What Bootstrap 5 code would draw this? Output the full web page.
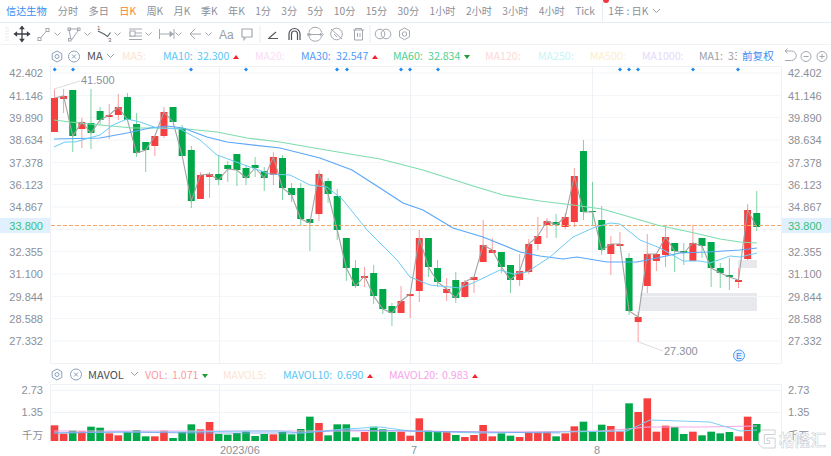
<!DOCTYPE html>
<html lang="zh-CN">
<head>
<meta charset="utf-8">
<title>信达生物 K线</title>
<link href="https://cdn.jsdelivr.net/npm/bootstrap@5.3.0/dist/css/bootstrap.min.css" rel="stylesheet">
<style>
html,body{margin:0;background:#fff;overflow:hidden}
body{width:831px;height:456px;position:relative;font-family:"Noto Sans CJK SC","Liberation Sans",sans-serif;color:#8b9099}
.tabbar{height:23px;padding:0 0 0 6px;font-size:10.2px;line-height:22px;border-bottom:1.5px solid #e6ecf3;gap:10.4px;white-space:nowrap;position:relative}
.tabbar .tb{color:#8b9099}
.tabbar .tb-name{color:#3b8df0;margin-right:.6px}
.tabbar .tb-on{color:#f9812a}
.tabbar .tb-range{border-left:1px solid #e6ecf3;padding-left:5px;margin-left:-3px;height:20px;line-height:20px;display:flex;align-items:center;gap:4px}
.dot-new{position:absolute;left:603px;top:-3px;width:6px;height:6px;border-radius:50%;background:#f5333f}
.toolrow{height:22px;border-bottom:1.5px solid #f0f2f5;position:relative}
.toolrow svg{display:block}
.legendrow{font-size:10.6px;white-space:nowrap;height:21px;line-height:21px;position:relative;overflow:hidden}
.legendrow .lg{position:absolute;top:0}
.plot{display:block}
.plot text{font-family:"Liberation Sans","Noto Sans CJK SC",sans-serif;font-size:11px;fill:#8b9099}
.plot text.cjk{font-family:"Noto Sans CJK SC",sans-serif;font-size:10.5px}
.tri-up,.tri-dn{display:inline-block;width:0;height:0;border-left:3px solid transparent;border-right:3px solid transparent;vertical-align:1px;margin-left:4px}
.tri-up{border-bottom:4px solid #f5222d}
.tri-dn{border-top:4px solid #1f9d35}
.lc-ma{color:#4a4f57;font-size:11px}
.c5{color:#fde3d3}.c10{color:#5cc5f5}.c20{color:#fbdcf5}.c30{color:#4f9bfa}.c60{color:#4fd08f}
.c120{color:#fcd8d8}.c250{color:#c6f5f8}.c500{color:#fdeccb}.c1000{color:#e5d9fb}.c1{color:#9a9ea6}
.cvol{color:#fb9a9e}.cm20{color:#f5a3ea}
.fq{color:#3b8df0;font-size:10.6px;background:#fff;padding-left:5px}
.brand{position:absolute;left:758px;top:428px;width:72px;height:22px;display:flex;align-items:center;gap:3px;white-space:nowrap;pointer-events:none}
.brand-t{font-family:"Noto Sans CJK SC",sans-serif;font-weight:700;font-size:15.5px;line-height:22px;letter-spacing:.3px;color:#fff;-webkit-text-stroke:.5px #c9ccd1;flex:none}
.brand svg{flex:none}
</style>
</head>
<body>
<nav class="tabbar d-flex align-items-center">
  <span class="tb tb-name">信达生物</span><span class="tb">分时</span><span class="tb">多日</span><span class="tb tb-on">日K</span><span class="tb">周K</span><span class="tb">月K</span><span class="tb">季K</span><span class="tb">年K</span><span class="tb">1分</span><span class="tb">3分</span><span class="tb">5分</span><span class="tb">10分</span><span class="tb">15分</span><span class="tb">30分</span><span class="tb">1小时</span><span class="tb">2小时</span><span class="tb">3小时</span><span class="tb">4小时</span><span class="tb">Tick</span>
  <span class="tb tb-range">1年 : 日K
    <svg width="9" height="6" viewBox="0 0 9 6"><path d="M1 1l3.5 3.5L8 1" fill="none" stroke="#9aa0a8"/></svg></span>
  <i class="dot-new"></i>
</nav>

<div class="toolrow">
<svg width="831" height="21" viewBox="0 23 831 21" fill="none" stroke="#a3a8b0" stroke-width="1">
  <g stroke="#e8eaee"><path d="M5 28h4M5 31h4M5 34h4M5 37h4M5 40h4"/></g>
  <g stroke="#3c4048" stroke-width="1.3"><path d="M22 27v14M15 34h14"/><path fill="#3c4048" d="M20.5 28.5L22 26.5l1.500 2zM20.500 39.500L22 41.500l1.500-2zM16.500 32.500L14.500 34l2 1.500zM27.500 32.500L29.500 34l-2 1.500z"/></g>
  <rect x="38" y="37.500" width="3" height="3"/><rect x="46" y="28.500" width="3" height="3"/><path d="M41 37.500l5-6"/>
  <path d="M54.500 32.500l3 3 3-3"/>
  <path d="M68.500 29h10M78.500 30l-7 10M69 30l2 10"/><rect x="68" y="28" width="2.500" height="2.500"/><rect x="77.500" y="28" width="2.500" height="2.500"/><rect x="68.500" y="38.500" width="2.500" height="2.500" fill="#fff"/>
  <path d="M84.500 32.500l3 3 3-3"/>
  <path d="M98 31l6 3 3.500 2.500 3-4" stroke="#5e636b" stroke-width="1.200"/><text x="97" y="30" font-size="6" fill="#5e636b" stroke="none" font-family="Liberation Sans">1</text><text x="108" y="42" font-size="6" fill="#5e636b" stroke="none" font-family="Liberation Sans">3</text>
  <path d="M114.500 32.500l3 3 3-3"/>
  <path d="M129 29h13M129 33h13M129 36h13M129 39.500h13"/><rect x="130" y="31" width="5" height="5" fill="#fff"/>
  <path d="M145.500 32.500l3 3 3-3"/>
  <path d="M159.500 29v10M174 29v10M160 34h14"/><path d="M170 31.500l3 2.500-3 2.500z" fill="#a3a8b0"/>
  <path d="M175.500 32.500l3 3 3-3"/>
  <path d="M190 34h11M195 29l-5 5 5 5"/>
  <path d="M205.500 32.500l3 3 3-3"/>
  <text x="219" y="39" font-size="12" fill="#9a9ea6" stroke="none" font-family="Liberation Sans">Aa</text>
  <path d="M242 29h10v8h-6l-2 2.500V37h-2z" stroke-width="1.200"/>
  <path d="M260 25v18" stroke="#e9ecf0"/>
  <path d="M268 38.500h10M269 38l7-6" stroke="#55595f" stroke-width="1.100"/>
  <path d="M289 40v-6a5.500 5.500 0 0 1 11 0v6M291.500 40v-6a3 3 0 0 1 6 0v6" stroke="#4d5159" stroke-width="1.200"/>
  <path d="M309 32a6.500 6.500 0 0 1 12.500 0M309 36.500a6.500 6.500 0 0 0 12.500 0M308 34.500h14"/><circle cx="309" cy="34.500" r="1.500"/><circle cx="321.500" cy="34.500" r="1.500"/>
  <circle cx="336.500" cy="34" r="5.800"/><path d="M331 29l11 10"/><path d="M334 34l3 3"/>
  <path d="M353 30h11M355.500 30v-1.500h6V30M354.500 30v10h8V30M357.500 33v4M360 33v4"/>
  <path d="M370 25v18" stroke="#e9ecf0"/>
  <circle cx="380" cy="34" r="4.800"/><circle cx="386" cy="34" r="4.800"/>
  <path d="M404.500 28l5 2.800v6l-5 2.900-5-2.900v-6z"/><circle cx="404.500" cy="34" r="2.200"/>
</svg>
</div>

<div class="legendrow" id="lg1">
  <svg class="lg" style="left:51px" width="30" height="21" viewBox="51 44 30 21" fill="none" stroke="#8ca0b8"><path d="M57 50l4.800 2.700v5.600L57 61l-4.800-2.700v-5.600z"/><circle cx="57" cy="55.500" r="2"/><circle cx="74" cy="55.500" r="5.500"/><path d="M72 53.500l4 4M76 53.500l-4 4"/></svg>
  <span class="lg lc-ma" style="left:87px">MA</span>
  <svg class="lg" style="left:106px;top:8px" width="9" height="6" viewBox="0 0 9 6"><path d="M1 1l3.500 3.500L8 1" fill="none" stroke="#9aa0a8"/></svg>
  <span class="lg c5" style="left:122px">MA5:</span>
  <span class="lg c10" style="left:163px">MA10:</span><span class="lg c10" style="left:197px">32.300<i class="tri-up"></i></span>
  <span class="lg c20" style="left:255px">MA20:</span>
  <span class="lg c30" style="left:301px">MA30:</span><span class="lg c30" style="left:336px">32.547<i class="tri-up"></i></span>
  <span class="lg c60" style="left:393px">MA60:</span><span class="lg c60" style="left:428px">32.834<i class="tri-dn"></i></span>
  <span class="lg c120" style="left:485px">MA120:</span>
  <span class="lg c250" style="left:538px">MA250:</span>
  <span class="lg c500" style="left:590px">MA500:</span>
  <span class="lg c1000" style="left:642px">MA1000:</span>
  <span class="lg c1" style="left:699px">MA1:</span><span class="lg c1" style="left:728px">33</span>
  <span class="lg fq" style="left:737px">前复权</span>
  <svg class="lg" style="left:782px" width="49" height="21" viewBox="782 44 49 21" fill="none" stroke="#a3a8b0"><path d="M785 50h6.500a4.500 4.500 0 0 1 0 9.500H785M785 50l2.500-2.500M785 50l2.500 2.500"/><circle cx="806" cy="55.500" r="5"/><path d="M803.500 55.500h5"/><circle cx="822" cy="55.500" r="5"/><path d="M819.500 55.500h5M822 53v5"/></svg>
</div>

<svg class="plot" id="main" width="831" height="298" viewBox="0 66 831 298"></svg>

<div class="legendrow" id="lg2" style="height:20px">
  <svg class="lg" style="left:51px" width="32" height="20" viewBox="51 364 32 20" fill="none" stroke="#8ca0b8"><path d="M57 369l4.800 2.700v5.600L57 380l-4.800-2.700v-5.600z"/><circle cx="57" cy="374.500" r="2"/><circle cx="76" cy="374.500" r="5.500"/><path d="M74 372.500l4 4M78 372.500l-4 4"/></svg>
  <span class="lg lc-ma" style="left:88px">MAVOL</span>
  <svg class="lg" style="left:130px;top:7px" width="9" height="6" viewBox="0 0 9 6"><path d="M1 1l3.500 3.500L8 1" fill="none" stroke="#9aa0a8"/></svg>
  <span class="lg cvol" style="left:145px">VOL:</span><span class="lg cvol" style="left:172px">1.071<i class="tri-dn"></i></span>
  <span class="lg c5" style="left:223px">MAVOL5:</span>
  <span class="lg c10" style="left:283px">MAVOL10:</span><span class="lg c10" style="left:337px">0.690<i class="tri-up"></i></span>
  <span class="lg cm20" style="left:389px">MAVOL20:</span><span class="lg cm20" style="left:442px">0.983<i class="tri-up"></i></span>
</div>

<svg class="plot" id="vol" width="831" height="72" viewBox="0 384 831 72"></svg>

<div class="brand">
  <svg width="18" height="20" viewBox="0 0 20 22" fill="#fff" stroke="#c9ccd1"><path d="M5 1h14v5H7v10h6v-3h-3v-3h9v11H5l-4-4V5z"/></svg>
  <span class="brand-t">格隆汇</span>
</div>

<script>
var R='#f5403f',G='#00a849';
var K=[[1,89,132,98,132],[1,89,113,96,99],[0,90,152,90,136],[1,118,148,122,129],[0,89,149,123,133],[0,107,125,111,120],[1,104,139,115,117],[1,94,120,107,115],[0,93,120,97,120],[0,113,157,124,153],[0,142,172,142,150],[1,136,156,136,146],[1,107,138,112,136],[0,107,122,107,122],[0,125,156,128,156],[0,146,208,150,201],[1,172,199,175,199],[1,172,198,174,177],[0,156,185,174,180],[0,161,182,165,169],[0,154,186,154,170],[0,165,185,168,178],[0,157,177,165,168],[0,167,191,171,178],[1,152,185,157,175],[0,155,200,158,188],[0,183,202,188,195],[0,183,226,188,219],[0,219,251,219,223],[1,170,221,174,214],[0,178,203,181,194],[0,189,240,196,230],[0,238,281,238,268],[0,260,288,268,286],[1,267,287,276,278],[0,265,304,273,296],[0,289,314,289,309],[0,303,326,306,313],[1,286,313,301,313],[1,294,318,294,296],[1,230,302,238,291],[0,238,277,238,267],[0,260,287,268,282],[1,278,301,289,293],[0,272,303,280,298],[1,280,298,282,297],[1,277,293,277,280],[1,220,262,245,262],[1,238,253,250,253],[0,252,273,252,267],[0,265,293,265,280],[1,254,286,271,280],[1,239,274,244,272],[1,217,250,236,244],[1,218,238,221,225],[0,214,238,222,225],[1,213,229,217,227],[1,168,227,176,222],[0,140,220,151,212],[0,182,225,211,212],[0,206,255,220,250],[1,236,275,244,254],[1,232,246,244,246],[0,253,315,258,311],[1,312,342,317,322],[1,234,293,254,286],[1,254,271,254,261],[1,225,267,237,255],[0,243,272,243,251],[0,243,265,251,253],[1,225,261,243,261],[0,238,258,238,246],[0,242,287,242,268],[0,263,288,268,273],[0,258,290,275,277],[1,268,288,280,282],[1,204,260,210,259],[0,191,231,213,227]];
var V=[196,221,212,214,200,203,220,226,216,210,229,229,212,234,216,193,208,186,222,224,219,214,228,222,223,216,223,207,170,189,226,193,193,232,216,200,208,216,215,227,175,212,216,216,225,231,225,195,229,220,227,231,216,217,215,229,220,199,185,215,194,198,214,130,156,115,215,197,201,222,215,226,215,220,216,229,170,192];
var MA60=[[54,120],[70,122],[100,125],[133,128],[167,128],[187,129],[217,132],[247,138],[280,142],[320,149],[380,159],[423,170],[470,185],[503,195],[540,201],[573,205],[602,209],[623,215],[657,225],[690,232],[720,239],[740,242],[757,243]];
var MA30=[[54,139],[100,138],[127,133],[150,128],[167,126],[183,128],[207,137],[227,142],[280,148],[320,158],[352,170],[380,188],[403,203],[423,210],[453,228],[483,237],[520,252],[540,256],[563,259],[577,257],[607,262],[637,262],[657,258],[680,253],[707,252],[740,250],[757,248]];
var MA10=[[54,147],[65,142],[75,142],[100,135],[113,125],[127,119],[140,122],[157,128],[180,129],[200,140],[217,155],[250,167],[270,174],[290,175],[310,185],[327,187],[343,200],[367,230],[397,260],[410,277],[430,285],[460,288],[473,283],[500,270],[513,274],[527,272],[550,257],[573,237],[593,228],[610,223],[620,224],[640,240],[660,248],[683,261],[700,261],[710,263],[730,256],[740,257],[757,253]];
var X=function(i){return 54.5+9.12*i};
var pts=function(a){return a.map(function(p){return p[0]+','+p[1]}).join(' ')};
var gridY=[73,95.5,117.5,140,162.5,184.5,207,229.5,251.5,274,296.5,318.500,341];
var lab=['42.402','41.146','39.890','38.634','37.378','36.123','34.867','','32.355','31.100','29.844','28.588','27.332'];
var s='';
s+='<rect x="0" y="218" width="50.500" height="15" fill="#e1f0fe"/><rect x="781" y="218" width="50" height="15" fill="#e1f0fe"/>';
s+='<rect x="640" y="293" width="117" height="18" fill="#e7e9ed"/><rect x="738" y="260" width="19" height="8" fill="#e7e9ed"/>';
gridY.forEach(function(y,i){s+='<line x1="51" x2="781" y1="'+y+'" y2="'+y+'" stroke="#f3f5f8"/>';
 if(lab[i]){s+='<text x="43" y="'+(y+4)+'" text-anchor="end">'+lab[i]+'</text><text x="788" y="'+(y+4)+'">'+lab[i]+'</text>';}});
[219.5,410.5,592.5].forEach(function(x){s+='<line x1="'+x+'" x2="'+x+'" y1="66" y2="364" stroke="#eef2f7"/>'});
s+='<path d="M50.500 66.500H781.500V363.500H50.500z" fill="none" stroke="#eef1f5"/>';
s+='<text x="43" y="229.500" text-anchor="end" style="fill:#35c07d">33.800</text><text x="788" y="229.500" style="fill:#35c07d">33.800</text>';
[54.7,73,191,246,337,347,401,410,438,620,629,638,693,738].forEach(function(x){s+='<path d="M'+x+' 67.500l2 2-2 2-2-2z" fill="#1e88f0"/>'});
K.forEach(function(k,i){var x=X(i),c=k[0]?R:G;
 s+='<line x1="'+x+'" x2="'+x+'" y1="'+k[1]+'" y2="'+k[2]+'" stroke="'+c+'" stroke-opacity=".5"/>';
 s+='<rect x="'+(x-3.5)+'" y="'+k[3]+'" width="7" height="'+(k[4]-k[3])+'" fill="'+c+'"/>';});
s+='<line x1="51" x2="781" y1="225.500" y2="225.500" stroke="#f4a56a" stroke-dasharray="4 2"/>';
s+='<polyline fill="none" stroke="#a2a2a2" stroke-width="1.100" points="'+K.map(function(k,i){return X(i)+','+(k[0]?k[3]:k[4])}).join(' ')+'"/>';
s+='<polyline fill="none" stroke="#7fdcae" stroke-width="1.200" points="'+pts(MA60)+'"/>';
s+='<polyline fill="none" stroke="#5aa7fb" stroke-width="1.200" points="'+pts(MA30)+'"/>';
s+='<polyline fill="none" stroke="#6ccbf5" stroke-width="1" points="'+pts(MA10)+'"/>';
s+='<path d="M54 89L80 81M638.500 342L663 351" stroke="#ddd" fill="none"/>';
s+='<text x="81" y="84">41.500</text><text x="664" y="355">27.300</text>';
s+='<circle cx="739" cy="355.500" r="5.500" fill="#e6f2ff" stroke="#4a9df5"/><text x="739" y="359" text-anchor="middle" style="font-size:9px;fill:#2f86f0">E</text>';
document.getElementById('main').innerHTML=s;

var t='';
[390.5,412.5].forEach(function(y){t+='<line x1="51" x2="781" y1="'+y+'" y2="'+y+'" stroke="#f0f4f8"/>'});
[219.5,410.5,592.5].forEach(function(x){t+='<line x1="'+x+'" x2="'+x+'" y1="384" y2="441" stroke="#eef2f7"/>'});
t+='<path d="M50.500 441.500V384.500H781.500V441.500" fill="none" stroke="#eef1f5"/>';
V.forEach(function(v,i){var y=360+v/3;t+='<rect x="'+(X(i)-3.8)+'" y="'+y+'" width="7.600" height="'+(441-y)+'" fill="'+(K[i][0]?R:G)+'"/>'});
t+='<polyline fill="none" stroke="#f5a9ea" stroke-width="1" points="54,431 120,431 200,431 300,431 410,431 500,432 600,431 627,429 647,427 700,427 757,426"/>';
t+='<polyline fill="none" stroke="#7cd0f5" stroke-width="1" points="54,433 120,432 190,432 245,431 280,431 300,433 345,429 380,427 410,431 480,433 560,432 627,431 650,420 680,421 710,422 740,431 757,430"/>';
t+='<polyline fill="none" stroke="#7f9ff0" stroke-width=".8" points="54,433 120,432 190,433 300,433 345,430 410,431 480,432 560,433"/>';
t+='<text x="43" y="394" text-anchor="end">2.73</text><text x="43" y="416" text-anchor="end">1.35</text><text class="cjk" x="43" y="439" text-anchor="end">千万</text>';
t+='<text x="788" y="394">2.73</text><text x="788" y="416">1.35</text><text class="cjk" x="788" y="439">千万</text>';
t+='<text x="220" y="454">2023/06</text><text x="411" y="454">7</text><text x="594" y="454">8</text>';
document.getElementById('vol').innerHTML=t;
</script>
<script src="https://cdn.jsdelivr.net/npm/bootstrap@5.3.0/dist/js/bootstrap.bundle.min.js"></script>
</body>
</html>
